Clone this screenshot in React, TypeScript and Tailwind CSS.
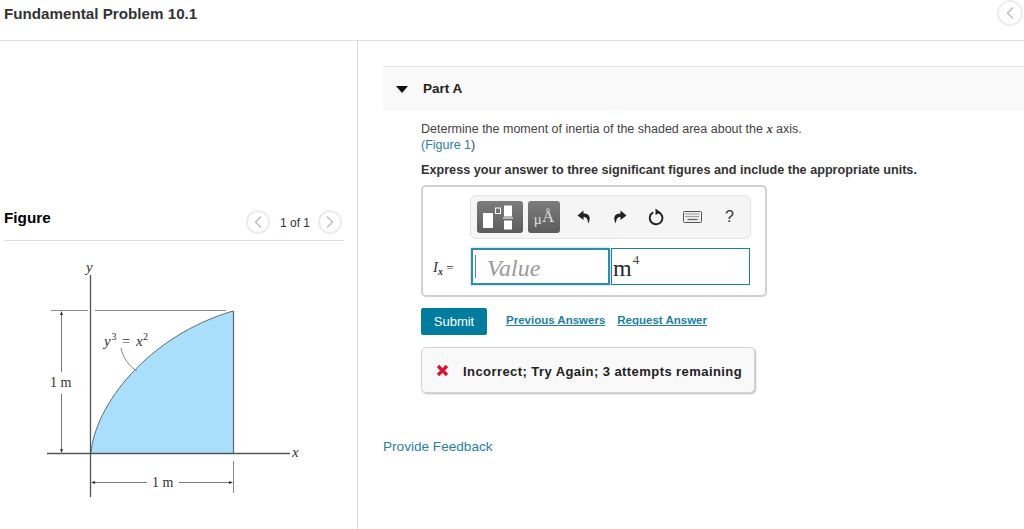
import { ChevronLeft, ChevronRight } from 'lucide-react';

const sans = "font-['Liberation_Sans',Arial,sans-serif]";
const serif = "font-['Liberation_Serif','Times_New_Roman',serif]";

function RoundNav({ dir, big }: { dir: 'left' | 'right'; big?: boolean }) {
  const Icon = dir === 'left' ? ChevronLeft : ChevronRight;
  return (
    <button
      className={`${big ? 'w-[26px] h-[26px]' : 'w-6 h-6'} rounded-full border-2 border-[#ececec] bg-white flex items-center justify-center`}
    >
      <Icon className="w-5 h-5 text-[#b9c2cc]" strokeWidth={2} />
    </button>
  );
}

function FigureDrawing() {
  return (
    <svg width="345" height="245" viewBox="0 257 345 245" className="block">
      <path d="M91 453 C95 405 148 336 233 311 L233 453 Z" fill="#a9dffb" />
      <path d="M91 453 C95 405 148 336 233 311" fill="none" stroke="#5f6a70" strokeWidth="1" />
      <path d="M233.5 311 V453" stroke="#5f6a70" strokeWidth="1.2" />
      <path d="M90.5 275 V497" stroke="#555" strokeWidth="1.3" />
      <path d="M47 453.5 H290" stroke="#555" strokeWidth="1.3" />
      <path d="M51 310.5 H88 M95 310.5 H226" stroke="#8a8a8a" strokeWidth="1" />
      <path d="M61.5 313 V372 M61.5 394 V452" stroke="#555" strokeWidth="0.8" />
      <path d="M61.5 311 l-1.5 4 h3 Z M61.5 453 l-1.5 -4 h3 Z" fill="#333" />
      <path d="M92 482.5 H147 M179 482.5 H232" stroke="#555" strokeWidth="0.8" />
      <path d="M91 482.5 l4 -1.5 v3 Z M233 482.5 l-4 -1.5 v3 Z" fill="#333" />
      <path d="M233.5 461 V493" stroke="#888" strokeWidth="1" />
      <path d="M121 348 C123 358 129 366 137 371" fill="none" stroke="#777" strokeWidth="0.9" />
      <g fontFamily="'Liberation Serif', serif" fill="#333">
        <text x="86" y="272" fontSize="15" fontStyle="italic">y</text>
        <text x="50" y="387" fontSize="14">1 m</text>
        <text x="152" y="487" fontSize="14">1 m</text>
        <text x="292" y="457" fontSize="15" fontStyle="italic">x</text>
        <text x="104" y="346" fontSize="15" fontStyle="italic">y</text>
        <text x="111.5" y="340" fontSize="10">3</text>
        <text x="122" y="346" fontSize="14">=</text>
        <text x="136" y="346" fontSize="15" fontStyle="italic">x</text>
        <text x="143" y="340" fontSize="10">2</text>
      </g>
    </svg>
  );
}

function TemplateIcon() {
  return (
    <svg width="36" height="27" viewBox="0 0 36 27">
      <rect x="1" y="9" width="10" height="15" fill="#fff" />
      <rect x="13.5" y="4" width="5" height="5.5" fill="none" stroke="#fff" strokeWidth="1" />
      <rect x="22" y="1.5" width="8" height="11" fill="#fff" />
      <rect x="21" y="13.5" width="10" height="1" fill="#fff" />
      <rect x="22" y="16.5" width="8" height="9" fill="#fff" />
    </svg>
  );
}

function Toolbar() {
  const btn = 'h-8 rounded-[3px] bg-gradient-to-b from-[#7d7d7d] to-[#5c5c5c] flex items-center justify-center';
  return (
    <div className="w-[281px] h-[44px] rounded-md border border-[#e4e4e4] bg-[#f5f5f5] flex items-center pl-[6px]">
      <div className={`${btn} w-[46px]`}>
        <TemplateIcon />
      </div>
      <div className={`${btn} w-8 ml-[5px] ${serif} text-[#dedede]`}>
        <span className="text-[15px] mt-[4px]">μ</span>
        <span className="text-[17px]">Å</span>
      </div>
      <svg width="14" height="14" viewBox="0 0 14 14" className="ml-[17px]">
        <path d="M6.5 0.5 L0.5 5.5 L6.5 10 V7 C9.5 6.8 11 9 11 13.5 C14 9 13.5 3.2 6.5 3.4 Z" fill="#222" />
      </svg>
      <svg width="14" height="14" viewBox="0 0 14 14" className="ml-[22px]">
        <path d="M7.5 0.5 L13.5 5.5 L7.5 10 V7 C4.5 6.8 3 9 3 13.5 C0 9 0.5 3.2 7.5 3.4 Z" fill="#222" />
      </svg>
      <svg width="16" height="18" viewBox="0 0 16 18" className="ml-[21px]">
        <path d="M5.2 4.4 A6.3 6.3 0 1 0 10 4" fill="none" stroke="#222" strokeWidth="1.9" />
        <path d="M7.5 0.5 L12.5 4.2 L7.5 7 Z" fill="#222" />
      </svg>
      <svg width="19" height="12" viewBox="0 0 19 12" className="ml-[19px]">
        <rect x="0.5" y="0.5" width="18" height="11" rx="1" fill="#eee" stroke="#555" />
        <path d="M2.5 3 H16.5 M2.5 5.5 H16.5" stroke="#666" strokeWidth="1.2" strokeDasharray="1.2 0.8" />
        <path d="M4.5 8.5 H14.5" stroke="#666" strokeWidth="1.3" />
      </svg>
      <span className={`${sans} ml-[23px] text-[16px] text-[#333]`}>?</span>
    </div>
  );
}

function AnswerBox() {
  return (
    <div className="w-[346px] h-[112px] rounded-[5px] border-2 border-[#d0d0d0] bg-white pt-2 pl-[47px]">
      <Toolbar />
      <div className="flex items-center mt-[9px] ml-px relative">
        <span className={`absolute -left-[38px] top-[8px] ${serif} text-[15px] text-[#333] whitespace-nowrap`}>
          <i>I</i>
          <sub className="text-[10px] italic font-bold">x</sub>
          <span className="text-[13px]"> =</span>
        </span>
        <div className="w-[139px] h-[37px] border-2 border-[#2d8dab] shadow-[0_0_2px_#7fc0d4] flex items-center pl-[2px]">
          <div className="w-px h-[23px] bg-[#4a86d8]" />
          <span className={`${serif} italic text-[24px] text-[#9a9a9a] ml-[11px] mt-[3px]`}>Value</span>
        </div>
        <div className="w-[139px] h-[37px] ml-px border border-[#1c7f9c] flex items-center pl-[1px]">
          <span className={`${serif} text-[24px] text-[#2a2a2a] mt-[3px]`}>m</span>
          <span className={`${serif} text-[13px] text-[#444] -mt-[13px] ml-px`}>4</span>
        </div>
      </div>
    </div>
  );
}

export default function App() {
  return (
    <div className={`w-[1024px] h-[529px] overflow-hidden bg-white ${sans} flex flex-col`}>
      <header className="h-[41px] shrink-0 border-b border-[#e0e0e0] flex items-start justify-between pl-1 pr-[1px]">
        <h1 className="text-[15.2px] font-bold text-[#333] leading-[28px]">Fundamental Problem 10.1</h1>
        <RoundNav dir="left" big />
      </header>

      <div className="flex flex-1 min-h-0">
        <aside className="w-[358px] shrink-0 border-r border-[#d8d8d8] pt-[167px] pl-1 pr-[13px]">
          <div className="h-[33px] border-b border-[#dedede] flex items-start justify-between">
            <h2 className="text-[15.3px] font-bold text-black leading-5">Figure</h2>
            <div className="flex items-center pt-[2px] pr-[2px]">
              <RoundNav dir="left" />
              <span className="text-[12px] text-[#333] ml-[10px] mr-2 mt-[2px]">1 of 1</span>
              <RoundNav dir="right" />
            </div>
          </div>
          <div className="-ml-1 mt-4">
            <FigureDrawing />
          </div>
        </aside>

        <main className="flex-1 min-w-0 pt-[25px] pl-[25px]">
          <div className="h-[45px] border-t border-[#e4e4e4] bg-[#f9f9f9] flex items-center pl-[13px]">
            <span className="w-0 h-0 border-l-[6px] border-r-[6px] border-t-[7px] border-l-transparent border-r-transparent border-t-[#111]" />
            <span className="ml-[15px] text-[13.5px] font-bold text-[#222]">Part A</span>
          </div>

          <div className="pl-[38px] pt-[10px]">
            <p className="text-[12.5px] leading-[16px] text-[#444]">
              Determine the moment of inertia of the shaded area about the{' '}
              <i className={`${serif} font-bold`}>x</i> axis.
              <br />
              <span className="text-[#2b7f9f]">(Figure 1</span>
              <span className="text-[#444]">)</span>
            </p>
            <p className="mt-[10px] text-[12.65px] leading-[15px] font-bold text-[#333]">
              Express your answer to three significant figures and include the appropriate units.
            </p>

            <div className="mt-[7px]">
              <AnswerBox />
            </div>

            <div className="flex items-start mt-[11px]">
              <button className="w-[66px] h-[27px] rounded-[2px] bg-[#007c9f] text-white text-[13px]">Submit</button>
              <a className="ml-[19px] mt-[4px] text-[11.5px] font-bold text-[#1c7fa3] underline">Previous Answers</a>
              <a className="ml-3 mt-[4px] text-[11.5px] font-bold text-[#1c7fa3] underline">Request Answer</a>
            </div>

            <div className="mt-3 w-[334px] h-[46px] rounded-[5px] border border-[#d4d4d4] bg-[#f9f9f9] shadow-[1px_1px_2px_#bbb] flex items-center pl-[14px]">
              <svg width="13" height="13" viewBox="0 0 13 13">
                <path d="M2 2 L11 11 M11 2 L2 11" stroke="#e0102f" strokeWidth="3.2" />
              </svg>
              <span className="ml-[14px] mt-[3px] text-[13px] tracking-[0.43px] font-bold text-[#222] whitespace-nowrap">
                Incorrect; Try Again; 3 attempts remaining
              </span>
            </div>
          </div>

          <a className="block mt-[44px] text-[13.6px] text-[#2b7f9f]">Provide Feedback</a>
        </main>
      </div>
    </div>
  );
}
